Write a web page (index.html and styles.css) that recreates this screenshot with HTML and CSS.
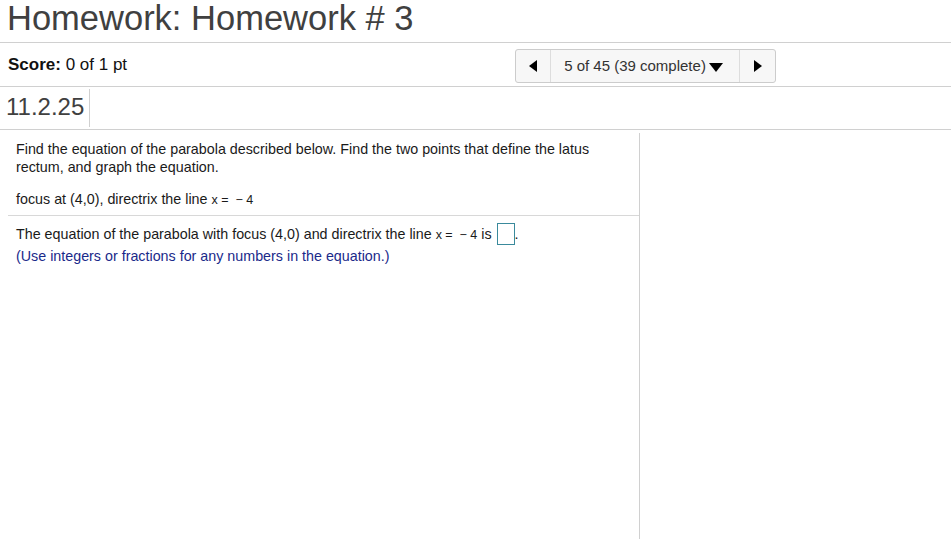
FILE: index.html
```html
<!DOCTYPE html>
<html>
<head>
<meta charset="utf-8">
<link rel="stylesheet" href="styles.css">
</head>
<body>
<div class="page">
  <h1 class="title">Homework: Homework # 3</h1>
  <div class="score-row">
    <div class="score"><b>Score:</b> 0 of 1 pt</div>
    <div class="nav">
      <button class="nav-btn prev"><svg width="10" height="12" viewBox="0 0 10 12"><polygon points="9,0 9,12 1,6" fill="#000"/></svg></button>
      <button class="nav-btn mid">5 of 45 (39 complete)<svg class="caret" width="14" height="10" viewBox="0 0 14 10"><polygon points="0,1 14,1 7,10" fill="#000"/></svg></button>
      <button class="nav-btn next"><svg width="10" height="12" viewBox="0 0 10 12"><polygon points="1,0 1,12 9,6" fill="#000"/></svg></button>
    </div>
  </div>
  <div class="qid-row">
    <div class="qid">11.2.25</div>
  </div>
  <div class="content">
    <div class="left">
      <div class="problem">
        <p class="p1">Find the equation of the parabola described below. Find the two points that define the latus rectum, and graph the equation.</p>
        <p class="p2">focus at (4,0), directrix the line <span class="math">x =&nbsp; − 4</span></p>
      </div>
      <div class="answer">
        <p class="a1">The equation of the parabola with focus (4,0) and directrix the line <span class="math">x =&nbsp; − 4</span> is <span class="box"></span>.</p>
        <p class="hint">(Use integers or fractions for any numbers in the equation.)</p>
      </div>
    </div>
    <div class="right"></div>
  </div>
</div>
</body>
</html>
```
FILE: styles.css
```css
* { box-sizing: border-box; }
html, body { margin: 0; padding: 0; background: #fff; }
body { font-family: "Liberation Sans", Arial, sans-serif; color: #000; width: 951px; height: 539px; overflow: hidden; }
.page { display: flex; flex-direction: column; height: 539px; }
.title {
  margin: 0; padding: 0 0 0 7px; height: 43px;
  font-weight: normal; font-size: 34.5px; line-height: 36px; color: #404040;
  border-bottom: 1px solid #d0d0d0;
}
.score-row {
  height: 44px; border-bottom: 1px solid #d0d0d0;
  display: flex; align-items: center; justify-content: space-between;
  padding: 1px 0 0 8px;
}
.score { font-size: 17px; color: #111; }
.score b { font-weight: bold; }
.nav { display: flex; margin-right: 175px; margin-top: 1px; height: 34px; border: 1px solid #ccc; border-radius: 3px; background: #f7f7f7; }
.nav-btn {
  border: none; background: transparent; margin: 0; padding: 0;
  font-family: "Liberation Sans", Arial, sans-serif; font-size: 15px; color: #333;
  display: flex; align-items: center; justify-content: center;
}
.prev { width: 35px; border-right: 1px solid #ddd; }
.mid { width: 189px; border-right: 1px solid #ddd; padding-right: 3px; }
.next { width: 35px; }
.caret { margin-left: 3px; margin-top: 2px; }
.qid-row { height: 43px; border-bottom: 1px solid #d0d0d0; display: flex; }
.qid {
  width: 90px; border-right: 1px solid #d0d0d0; margin: 2px 0 2px 0;
  font-size: 24px; color: #404040; padding: 4px 0 0 6px; line-height: 28px;
}
.content { flex: 1; display: flex; padding-top: 3px; }
.left { width: 640px; border-right: 1px solid #d0d0d0; }
.right { flex: 1; }
.problem { padding: 7px 0 0 8px; border-bottom: 1px solid #d8d8d8; margin-left: 8px; }
p { margin: 0; font-size: 14.3px; line-height: 18px; color: #1a1a1a; }
.p1 { width: 600px; }
.p2 { padding: 14px 0 6px 0; }
.math { font-size: 12.5px; }
.answer { padding: 7px 0 0 16px; }
.a1 { line-height: 21px; }
.box { display: inline-block; width: 18px; height: 22px; border: 1px solid #3a8a9c; vertical-align: middle; margin-left: 1px; margin-bottom: 2px; }
.hint { color: #1a2a8a; }
```
